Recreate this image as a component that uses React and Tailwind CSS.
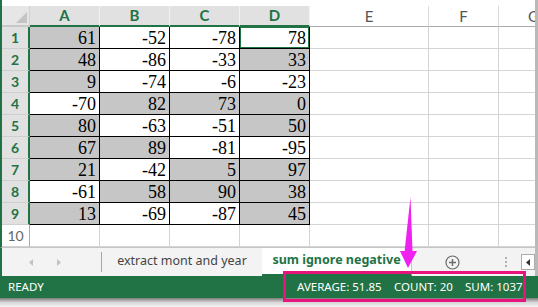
import React from 'react';

const data = [
  [61, -52, -78, 78],
  [48, -86, -33, 33],
  [9, -74, -6, -23],
  [-70, 82, 73, 0],
  [80, -63, -51, 50],
  [67, 89, -81, -95],
  [21, -42, 5, 97],
  [-61, 58, 90, 38],
  [13, -69, -87, 45],
];

const selCols = ['A', 'B', 'C', 'D'];
const otherCols = ['E', 'F', 'G'];

const DataCell = ({ value, active }) => {
  const gray = value >= 0 && !active;
  return (
    <div className={gray ? 'border-r border-b border-black bg-[#c6c6c6]' : 'border-r border-b border-black bg-white'}>
      <div
        className={
          active
            ? 'h-full flex items-center justify-end pr-[2px] border border-[#217346] text-[18px] leading-none text-black font-["Liberation_Serif",serif]'
            : 'h-full flex items-center justify-end pr-[3px] text-[18px] leading-none text-black font-["Liberation_Serif",serif]'
        }
      >
        {value}
      </div>
    </div>
  );
};

const EmptyCell = () => <div className="border-r border-b border-[#d4d4d4] bg-white" />;

const Sheet = () => (
  <div className="grid w-max grid-cols-[28px_70px_70px_70px_70px_119px_70px_70px] grid-rows-[21px_repeat(10,22px)]">
    {/* header row */}
    <div className="relative bg-[#e6e6e6] border-r border-r-[#d0d0d0] border-b-2 border-b-[#c8c8c8]">
      <svg className="absolute right-[2px] bottom-[2px]" width="11" height="11" viewBox="0 0 11 11">
        <polygon points="11,0 11,11 0,11" fill="#c4c4c4" />
      </svg>
    </div>
    {selCols.map((c) => (
      <div
        key={c}
        className="flex items-center justify-center bg-[#e1e1e1] border-r border-r-[#f2f2f2] border-b-2 border-b-[#217346] text-[15px] font-bold text-[#217346] font-['Lato',sans-serif]"
      >
        {c}
      </div>
    ))}
    {otherCols.map((c) => (
      <div
        key={c}
        className="flex items-center justify-center bg-white border-r border-r-[#dadada] border-b border-b-[#ababab] text-[15px] text-[#555] font-['Lato',sans-serif]"
      >
        {c}
      </div>
    ))}

    {/* data rows */}
    {data.map((row, r) => (
      <React.Fragment key={r}>
        <div className="flex items-center justify-center bg-[#e1e1e1] border-r-2 border-r-[#217346] border-b border-b-[#cfcfcf] text-[14px] font-bold text-[#217346] font-['Lato',sans-serif]">
          {r + 1}
        </div>
        {row.map((v, c) => (
          <DataCell key={c} value={v} active={r === 0 && c === 3} />
        ))}
        <EmptyCell />
        <EmptyCell />
        <EmptyCell />
      </React.Fragment>
    ))}

    {/* row 10 */}
    <div className="flex items-center justify-center bg-white border-r border-r-[#ababab] border-b border-b-[#d4d4d4] text-[14px] text-[#666] font-['Lato',sans-serif]">
      10
    </div>
    {[0, 1, 2, 3, 4, 5, 6].map((i) => (
      <EmptyCell key={i} />
    ))}
  </div>
);

const TabBar = () => (
  <div className="h-[29px] shrink-0 flex items-stretch bg-[#f3f3f3] border-t border-t-[#c6c6c6] border-l-2 border-l-[#217346] border-r-[3px] border-r-[#b9b9b9] font-['Noto_Sans',sans-serif]">
    <div className="w-[99px] flex items-center">
      <svg className="ml-[27px]" width="5" height="7" viewBox="0 0 5 7">
        <polygon points="4,0 4,7 0,3.5" fill="#c2c2c2" />
      </svg>
      <svg className="ml-[23px]" width="5" height="7" viewBox="0 0 5 7">
        <polygon points="0,0 0,7 4,3.5" fill="#c2c2c2" />
      </svg>
    </div>
    <div className="my-[4px] w-px bg-[#a6a6a6]" />
    <div className="w-[160px] flex items-center justify-center text-[12.5px] text-[#444] pb-[2px]">
      extract mont and year
    </div>
    <div className="w-[150px] flex items-center justify-center bg-white border-r border-r-[#c6c6c6] border-b-2 border-b-[#217346] text-[12.5px] font-bold text-[#217346] pb-[2px]">
      sum ignore negative
    </div>
    <div className="flex-1 flex items-center">
      <svg className="ml-[33px]" width="15" height="15" viewBox="0 0 15 15">
        <circle cx="7.5" cy="7.5" r="6.5" fill="none" stroke="#6a6a6a" strokeWidth="1.2" />
        <path d="M7.5 4v7M4 7.5h7" stroke="#6a6a6a" strokeWidth="1.4" />
      </svg>
      <div className="ml-[45px] flex flex-col gap-[2px]">
        <div className="w-[2px] h-[2px] bg-[#b0b0b0]" />
        <div className="w-[2px] h-[2px] bg-[#b0b0b0]" />
        <div className="w-[2px] h-[2px] bg-[#b0b0b0]" />
      </div>
      <div className="ml-auto w-[14px] h-[16px] flex items-center justify-center bg-white border border-[#ababab]">
        <svg width="4" height="7" viewBox="0 0 4 7">
          <polygon points="4,0 4,7 0,3.5" fill="#333" />
        </svg>
      </div>
    </div>
  </div>
);

const StatusBar = () => (
  <div className="h-[22px] shrink-0 flex items-center bg-[#217346] text-white text-[11.5px] font-['Noto_Sans',sans-serif]">
    <span className="ml-[8px] w-[289px]">READY</span>
    <span className="w-[97px]">AVERAGE: 51.85</span>
    <span className="w-[71px]">COUNT: 20</span>
    <span>SUM: 1037</span>
  </div>
);

export default function App() {
  return (
    <div className="relative w-[538px] h-[307px] overflow-hidden bg-white flex flex-col">
      <div className="h-[6px] shrink-0 bg-white border-l-2 border-l-[#217346] border-r-[3px] border-r-[#b9b9b9]" />
      <div className="h-[241px] shrink-0 overflow-hidden border-l-2 border-l-[#217346] border-r-[3px] border-r-[#b9b9b9]">
        <Sheet />
      </div>
      <TabBar />
      <StatusBar />
      <div className="flex-1 bg-linear-to-b from-[#7c7c7c] via-[#d8d8d8] to-[#f4f4f4]" />

      {/* highlight box */}
      <div className="absolute left-[283px] top-[271px] w-[243px] h-[31px] border-[3px] border-[#e8147d]" />

      {/* arrow */}
      <svg className="absolute left-0 top-0 pointer-events-none" width="538" height="307" viewBox="0 0 538 307">
        <polygon points="410.5,197 412.5,252 404.5,252" fill="#f020f0" />
        <polygon points="400,251 417,251 408,268" fill="#f020f0" />
      </svg>
    </div>
  );
}
